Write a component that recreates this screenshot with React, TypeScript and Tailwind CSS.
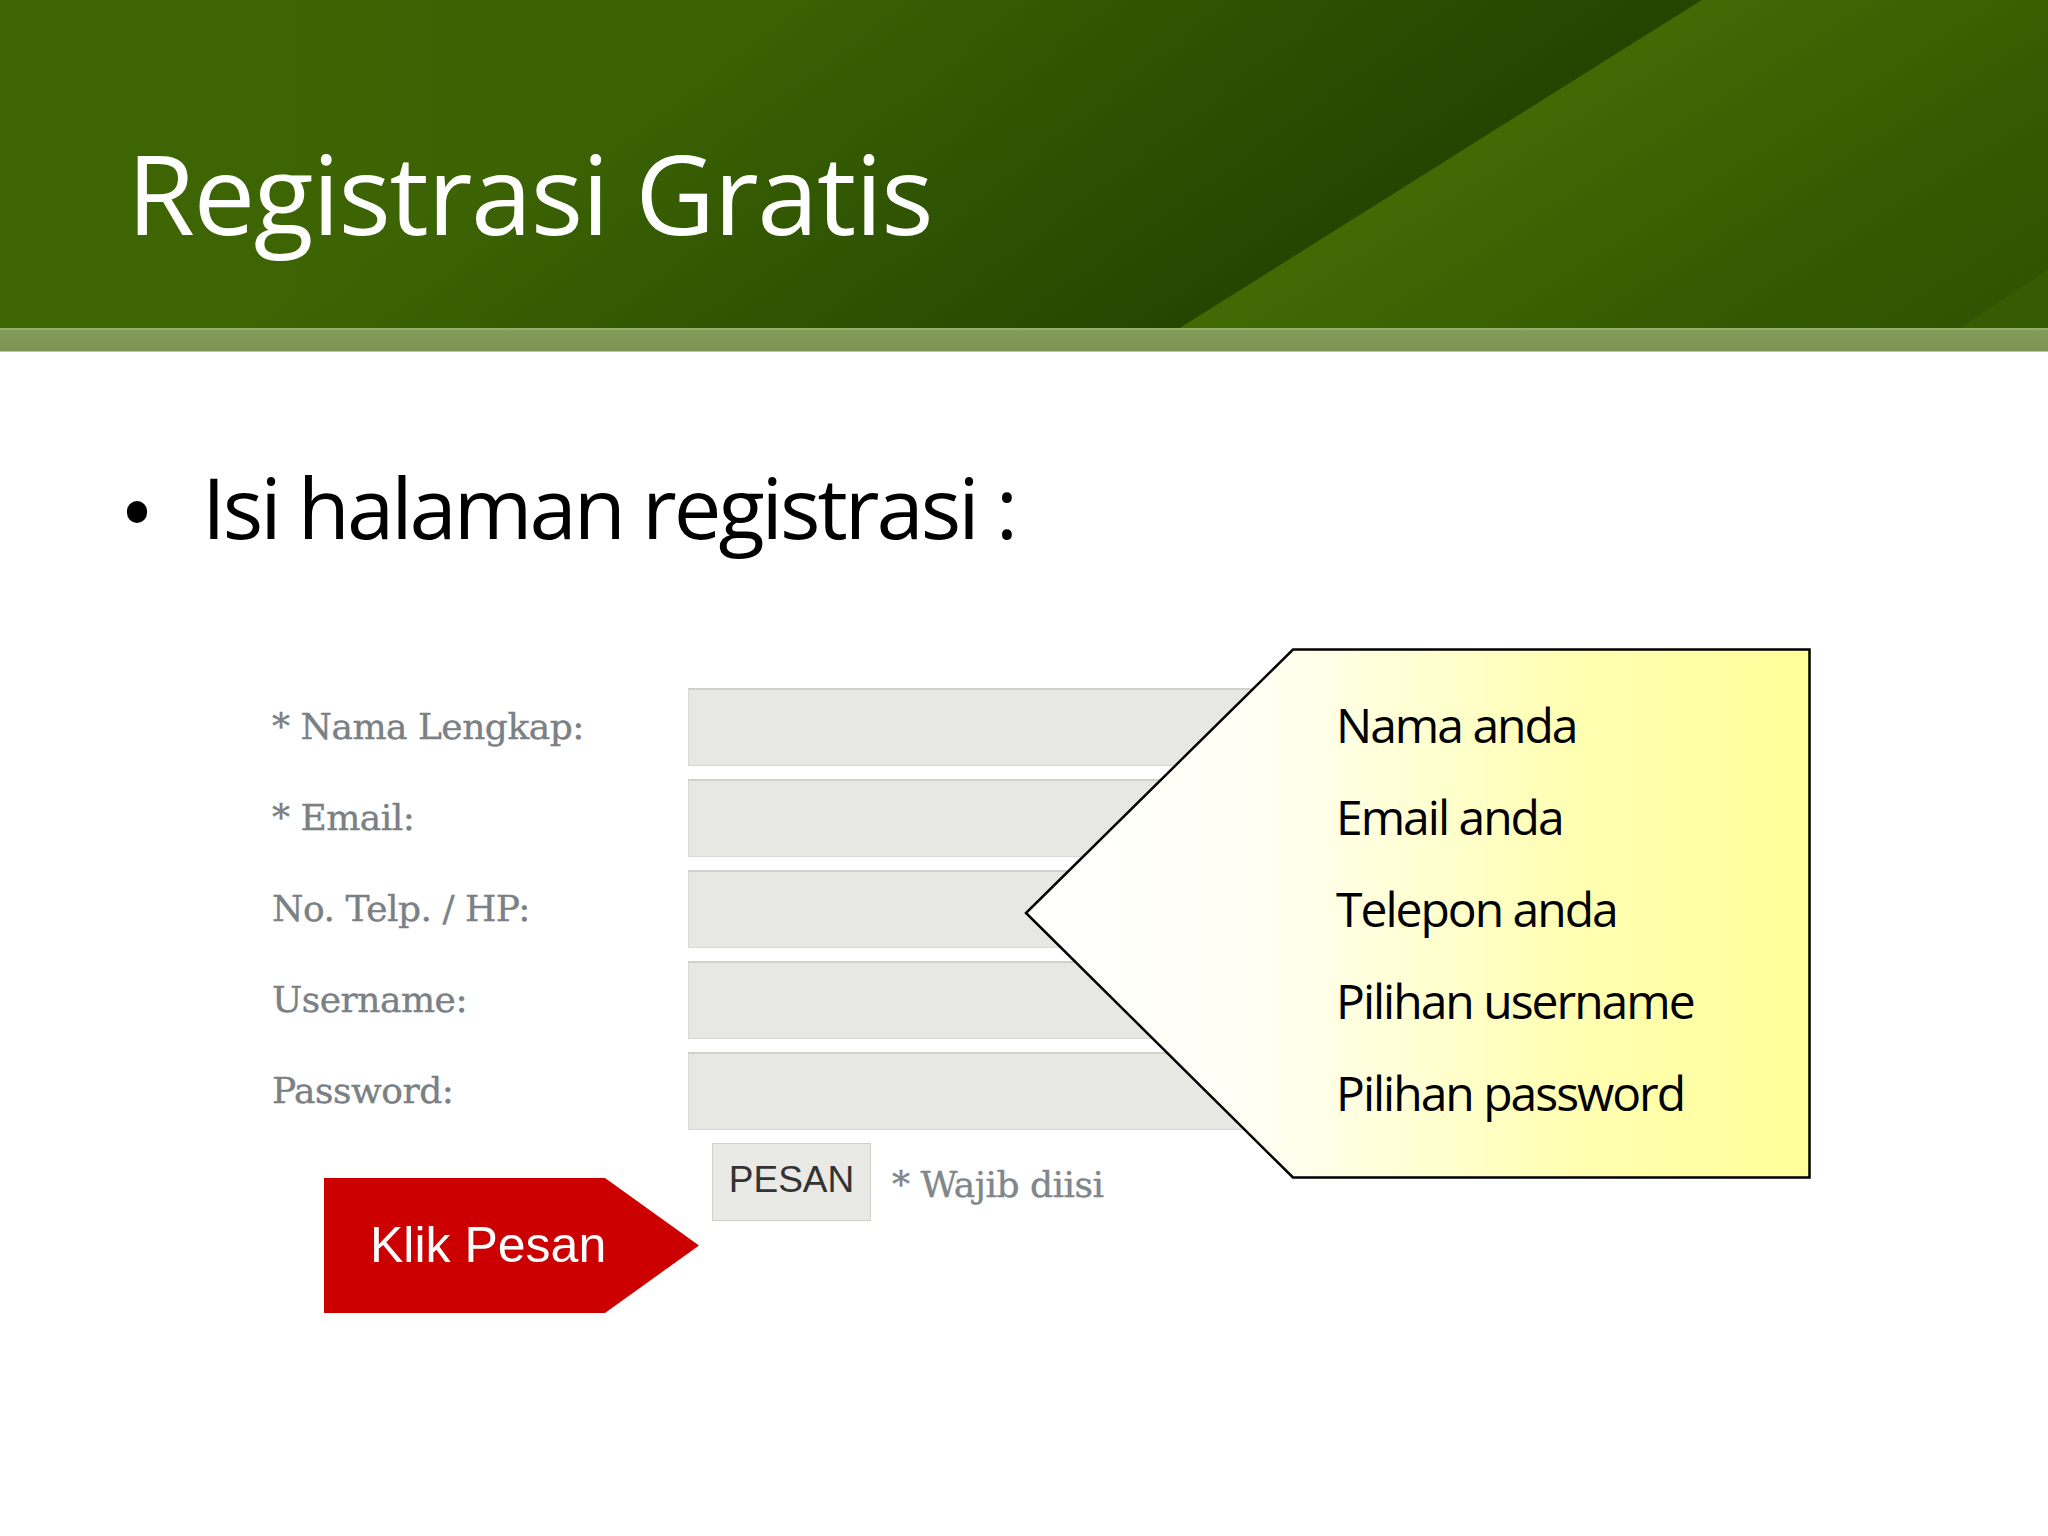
const labels = ['* Nama Lengkap:', '* Email:', 'No. Telp. / HP:', 'Username:', 'Password:']

const hints = ['Nama anda', 'Email anda', 'Telepon anda', 'Pilihan username', 'Pilihan password']

function HeaderArt() {
  return (
    <svg className="absolute inset-0" width="2048" height="328" viewBox="0 0 2048 328">
      <defs>
        <linearGradient id="base" x1="0" y1="0" x2="1" y2="0">
          <stop offset="0" stopColor="#3f6604" />
          <stop offset="0.45" stopColor="#3a6103" />
          <stop offset="0.7" stopColor="#345a02" />
          <stop offset="1" stopColor="#2e5201" />
        </linearGradient>
        <linearGradient id="shade" gradientUnits="userSpaceOnUse" x1="1175" y1="-259" x2="1441" y2="164">
          <stop offset="0" stopColor="#264800" stopOpacity="0" />
          <stop offset="1" stopColor="#224300" stopOpacity="0.9" />
        </linearGradient>
        <linearGradient id="stripe" gradientUnits="userSpaceOnUse" x1="1441" y1="164" x2="1760" y2="670">
          <stop offset="0" stopColor="#416a04" />
          <stop offset="0.5" stopColor="#335802" />
          <stop offset="1" stopColor="#2c4f00" />
        </linearGradient>
      </defs>
      <rect width="2048" height="328" fill="url(#base)" />
      <polygon points="0,0 1702,0 1180,328 0,328" fill="url(#shade)" />
      <polygon points="1702,0 2048,0 2048,328 1180,328" fill="url(#stripe)" />
      <polygon points="2048,270 2048,328 1960,328" fill="#3a6103" opacity="0.6" />
    </svg>
  )
}

function Callout() {
  return (
    <div className="absolute left-[1024px] top-[648px] w-[787px] h-[531px]">
      <svg className="absolute inset-0" width="787" height="531" viewBox="0 0 787 531">
        <defs>
          <linearGradient id="note" x1="0" y1="0" x2="1" y2="0">
            <stop offset="0" stopColor="#ffffff" />
            <stop offset="0.3" stopColor="#fffff4" />
            <stop offset="0.7" stopColor="#ffffb2" />
            <stop offset="1" stopColor="#ffff99" />
          </linearGradient>
        </defs>
        <polygon
          points="269,1.5 785.5,1.5 785.5,529.5 269,529.5 2,265"
          fill="url(#note)"
          stroke="#000"
          strokeWidth="2.5"
        />
      </svg>
      <ul className="relative pl-[312px] pt-[31px] flex flex-col">
        {hints.map(h => (
          <li key={h} className="h-[92px] leading-[92px] text-[48px] tracking-[-2px] text-black">
            {h}
          </li>
        ))}
      </ul>
    </div>
  )
}

export default function App() {
  return (
    <div className="relative w-[2048px] h-[1536px] overflow-hidden bg-white font-['Open_Sans',sans-serif]">
      {/* Title bar */}
      <header className="relative h-[328px] overflow-hidden">
        <HeaderArt />
        <h1 className="relative pl-[127px] pt-[137px] text-[110px] leading-none tracking-[-1.4px] text-white">
          Registrasi Gratis
        </h1>
      </header>
      <div className="h-[24px] border-t-2 border-[#93b067] bg-gradient-to-b from-[#819c58] to-[#7b9253] border-b border-b-[#b9c7a4]" />

      {/* Bullet */}
      <div className="flex items-start pt-[112px] pl-[127px]">
        <span className="mt-[37px] w-[20px] h-[22px] rounded-full bg-black" />
        <p className="ml-[55px] text-[85px] leading-none tracking-[-3px] text-black">Isi halaman registrasi :</p>
      </div>

      {/* Form screenshot */}
      <div className="mt-[139px] ml-[272px] grid grid-cols-[416px_570px] gap-y-[13px] font-['DejaVu_Serif',serif]">
        {labels.map(l => (
          <div key={l} className="contents">
            <div className="h-[78px] flex items-center text-[36px] tracking-[-0.5px] text-[#7a8084] [-webkit-text-stroke:0.4px_#7a8084]">
              {l}
            </div>
            <div className="h-[78px] bg-[#e7e7e3] border border-[#d8d8d4] border-t-2 border-t-[#d0d0cc]" />
          </div>
        ))}
        <div className="pl-[52px] pt-[35px]">
          <div className="w-[375px] h-[135px] bg-[#cc0000] [clip-path:polygon(0_0,281px_0,375px_50%,281px_100%,0_100%)] flex items-center pl-[46px]">
            <span className="text-white text-[50px] font-['Liberation_Sans',Arial,sans-serif]">Klik Pesan</span>
          </div>
        </div>
        <div className="flex items-start">
          <button className="ml-[24px] w-[159px] h-[78px] pb-[4px] bg-[#e9e9e5] border border-[#cfcfcb] text-[37px] text-[#333] font-['Liberation_Sans',Arial,sans-serif]">
            PESAN
          </button>
          <span className="ml-[21px] h-[78px] pt-[6px] flex items-center text-[36px] tracking-[-0.5px] text-[#80868a] [-webkit-text-stroke:0.4px_#80868a]">
            * Wajib diisi
          </span>
        </div>
      </div>

      <Callout />
    </div>
  )
}
